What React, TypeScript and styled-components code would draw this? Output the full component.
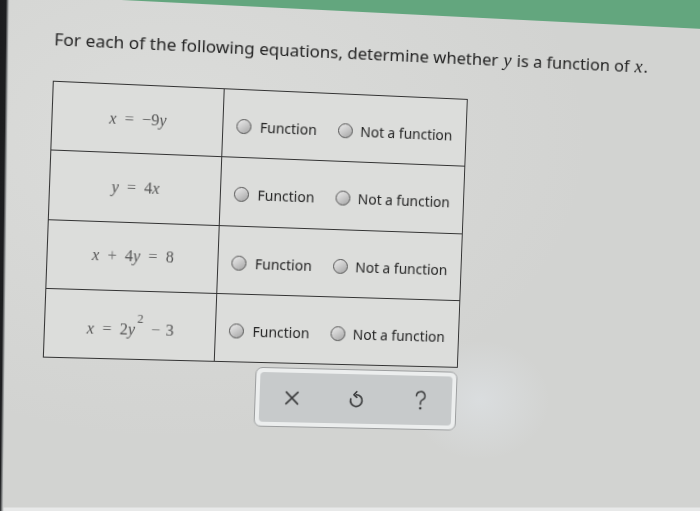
import React from "react";
import styled, { createGlobalStyle } from "styled-components";

/* ---------- perspective of the photographed screen ---------- */
type Pt = [number, number];

function solveLinear(A: number[][], b: number[]): number[] {
  const n = b.length;
  const M = A.map((row, i) => [...row, b[i]]);
  for (let col = 0; col < n; col++) {
    let piv = col;
    for (let r = col + 1; r < n; r++) {
      if (Math.abs(M[r][col]) > Math.abs(M[piv][col])) piv = r;
    }
    [M[col], M[piv]] = [M[piv], M[col]];
    for (let r = 0; r < n; r++) {
      if (r === col) continue;
      const f = M[r][col] / M[col][col];
      for (let c = col; c <= n; c++) M[r][c] -= f * M[col][c];
    }
  }
  return M.map((row, i) => row[n] / row[i]);
}

function homography(src: Pt[], dst: Pt[]): string {
  const A: number[][] = [];
  const b: number[] = [];
  src.forEach(([x, y], i) => {
    const [u, v] = dst[i];
    A.push([x, y, 1, 0, 0, 0, -x * u, -y * u]);
    b.push(u);
    A.push([0, 0, 0, x, y, 1, -x * v, -y * v]);
    b.push(v);
  });
  const [a, bb, c, d, e, f, g, h] = solveLinear(A, b);
  return `matrix3d(${a},${d},0,${g},${bb},${e},0,${h},0,0,1,0,${c},${f},0,1)`;
}

const SCREEN_TRANSFORM = homography(
  [
    [50, 105],
    [465, 105],
    [50, 379],
    [465, 379],
  ],
  [
    [55, 80],
    [470, 100],
    [45, 357],
    [460, 369],
  ]
);

/* ---------- styles ---------- */
const GlobalStyle = createGlobalStyle`
  html, body {
    margin: 0;
    height: 100%;
    overflow: hidden;
  }
  body {
    font-family: "Noto Sans", "Liberation Sans", sans-serif;
    background:
      linear-gradient(90.67deg, #1b1c1e 0, #1d1e20 6px, #77797a 7.5px, #cdcfce 9px, transparent 10px),
      linear-gradient(to bottom, transparent 507px, #e8e9e9 508px),
      radial-gradient(ellipse 70px 60px at 480px 400px, rgba(230, 236, 243, 0.4), transparent),
      radial-gradient(ellipse 420px 300px at 170px 140px, rgba(226, 227, 225, 0.6), transparent),
      #d2d3d1;
  }
  #root {
    height: 100%;
  }
`;

const Screen = styled.div`
  width: 820px;
  transform-origin: 0 0;
  transform: ${SCREEN_TRANSFORM};
  filter: blur(0.3px);
`;

const Header = styled.header`
  margin-top: -60px;
  height: 82px;
  background: #63a67e;
`;

const Content = styled.main`
  padding-left: 50px;
`;

const Prompt = styled.p`
  margin: 32px 0 0;
  font-size: 17px;
  line-height: 20px;
  color: #232323;
  white-space: nowrap;
`;

const PromptVar = styled.i`
  font-family: "Liberation Serif", serif;
  font-size: 19px;
  margin: 0 1px;
`;

const Table = styled.div`
  margin-top: 31px;
  width: 415px;
  box-sizing: border-box;
  display: grid;
  grid-template-columns: 168px 1fr;
  grid-auto-rows: 68.25px;
  border-top: 1px solid #333;
  border-left: 1px solid #333;
  background: #dcdddb;
`;

const Cell = styled.div`
  box-sizing: border-box;
  border-right: 1px solid #333;
  border-bottom: 1px solid #333;
  display: flex;
  align-items: center;
  justify-content: center;
`;

const EquationCell = styled(Cell)`
  font-family: "Liberation Serif", serif;
  font-size: 16px;
  color: #555;
`;

const Equation = styled.span`
  white-space: nowrap;
`;

const ChoiceCell = styled(Cell)`
  padding-top: 6px;
  gap: 21px;
`;

const V = styled.i`
  font-style: italic;
`;

const Op = styled.span<{ $before?: number; $after?: number }>`
  color: #6c6c6c;
  margin: 0 ${(p) => p.$after ?? 8}px 0 ${(p) => p.$before ?? 8}px;
`;

const Sup = styled.span`
  font-size: 12px;
  vertical-align: 12px;
  margin-left: 2px;
`;

const Option = styled.label`
  display: flex;
  align-items: center;
  gap: 8px;
  font-size: 14px;
  color: #242424;
  white-space: nowrap;
`;

const Radio = styled.span`
  width: 15px;
  height: 15px;
  box-sizing: border-box;
  border-radius: 50%;
  border: 1.5px solid #555;
  background: linear-gradient(145deg, #ececec 0%, #cdcdcd 45%, #a4a4a4 100%);
`;

const ToolRow = styled.div`
  width: 415px;
  display: flex;
  justify-content: flex-end;
  margin-top: 4px;
`;

const Toolbar = styled.div`
  width: 205px;
  height: 60px;
  box-sizing: border-box;
  border: 1px solid #9c9e9f;
  border-radius: 7px;
  background: #eceeee;
  padding: 4px;
`;

const ToolInner = styled.div`
  height: 100%;
  border-radius: 4px;
  background: #c7cacb;
  display: grid;
  grid-template-columns: repeat(3, 1fr);
  align-items: center;
  justify-items: center;
`;

const IconButton = styled.button`
  background: none;
  border: 0;
  padding: 0;
  display: flex;
  color: #3a3b3c;
`;

/* ---------- data ---------- */
const rows: React.ReactNode[] = [
  <>
    <V>x</V>
    <Op>=</Op>
    <span>−9</span>
    <V>y</V>
  </>,
  <>
    <V>y</V>
    <Op>=</Op>
    <span>4</span>
    <V>x</V>
  </>,
  <>
    <V>x</V>
    <Op>+</Op>
    <span>4</span>
    <V>y</V>
    <Op>=</Op>
    <span>8</span>
  </>,
  <>
    <V>x</V>
    <Op>=</Op>
    <span>2</span>
    <V>y</V>
    <Sup>2</Sup>
    <Op $before={8} $after={5}>
      −
    </Op>
    <span>3</span>
  </>,
];

const CloseIcon = () => (
  <svg width="17" height="17" viewBox="0 0 16 16" fill="none" stroke="currentColor" strokeWidth="1.6" strokeLinecap="round">
    <path d="M2.5 2.5 L13.5 13.5 M13.5 2.5 L2.5 13.5" />
  </svg>
);

const UndoIcon = () => (
  <svg width="19" height="19" viewBox="0 0 18 18" fill="none" stroke="currentColor" strokeWidth="1.6" strokeLinecap="round" strokeLinejoin="round">
    <path d="M9 4.5 A5.6 5.6 0 1 1 3.6 8.6" />
    <path d="M9.2 1.6 L6.6 4.5 L9.4 6.9" />
  </svg>
);

const HelpIcon = () => (
  <svg width="18" height="24" viewBox="0 0 18 22" fill="none" stroke="currentColor" strokeWidth="1.5" strokeLinecap="round">
    <path d="M4.6 6.6 A4.4 4.4 0 1 1 10.6 10.6 C9.4 11.3 9 12.1 9 13.3 V15" />
    <circle cx="9" cy="19" r="0.6" fill="currentColor" />
  </svg>
);

export default function App() {
  return (
    <>
      <GlobalStyle />
      <Screen>
        <Header />
        <Content>
          <Prompt>
            For each of the following equations, determine whether <PromptVar>y</PromptVar> is a function of{" "}
            <PromptVar>x</PromptVar>.
          </Prompt>
          <Table>
            {rows.map((eq, i) => (
              <React.Fragment key={i}>
                <EquationCell>
                  <Equation>{eq}</Equation>
                </EquationCell>
                <ChoiceCell>
                  <Option>
                    <Radio />
                    Function
                  </Option>
                  <Option>
                    <Radio />
                    Not a function
                  </Option>
                </ChoiceCell>
              </React.Fragment>
            ))}
          </Table>
          <ToolRow>
            <Toolbar>
              <ToolInner>
                <IconButton aria-label="Close">
                  <CloseIcon />
                </IconButton>
                <IconButton aria-label="Undo">
                  <UndoIcon />
                </IconButton>
                <IconButton aria-label="Help">
                  <HelpIcon />
                </IconButton>
              </ToolInner>
            </Toolbar>
          </ToolRow>
        </Content>
      </Screen>
    </>
  );
}
